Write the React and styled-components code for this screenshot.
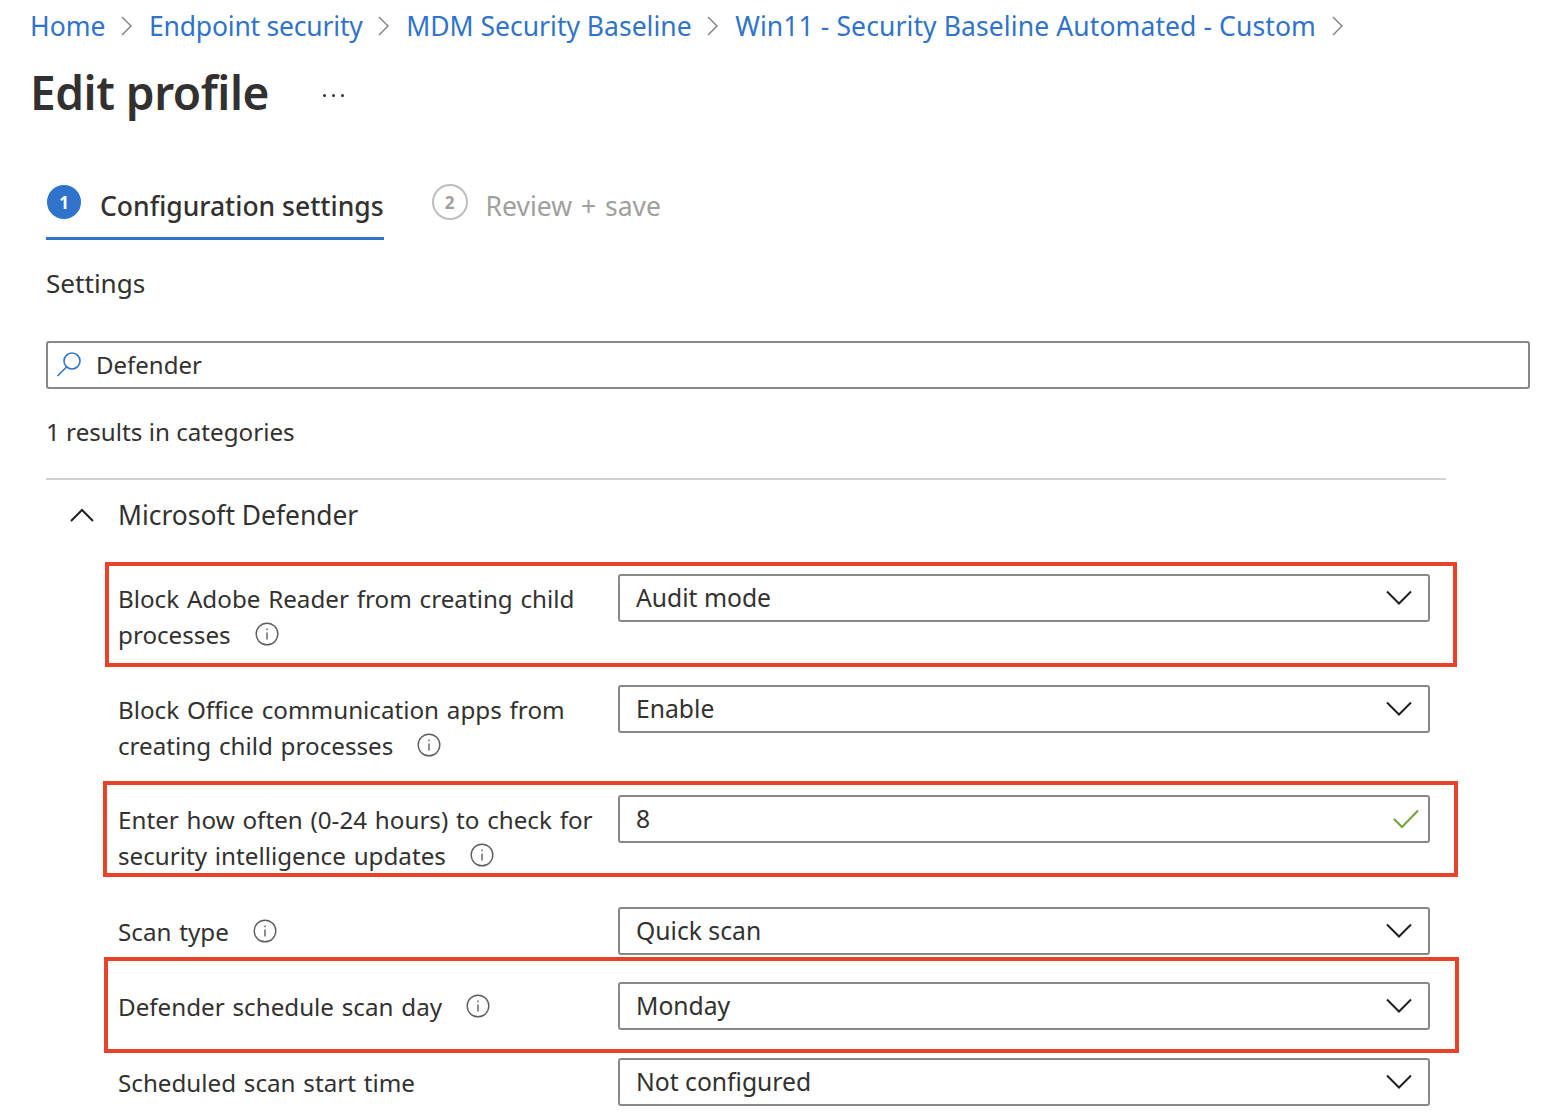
import React from "react";
import styled, { createGlobalStyle } from "styled-components";

const GlobalStyle = createGlobalStyle`
  html, body {
    margin: 0;
    background: #fff;
  }
  body {
    font-family: "Noto Sans", "Open Sans", "Liberation Sans", sans-serif;
    color: #323130;
  }
  * {
    box-sizing: border-box;
  }
`;

const Page = styled.div`
  width: 1542px;
  height: 1120px;
  overflow: hidden;
  padding-top: 7px;
`;

const Breadcrumbs = styled.nav`
  display: flex;
  align-items: center;
  height: 40px;
  padding: 0 0 2px 30px;
  font-size: 26.5px;
  color: #2f73cb;
  white-space: nowrap;
`;

const Crumb = styled.span`
  letter-spacing: ${(p) => p.$spacing || 0}px;
`;

const CrumbSep = styled.svg`
  width: 14px;
  height: 22px;
  margin: 0 14.8px;
  fill: none;
  stroke: #7a7a7a;
  stroke-width: 1.3;
`;

const TitleRow = styled.div`
  display: flex;
  align-items: center;
  height: 68px;
  margin-top: 11px;
  padding-left: 30px;
`;

const Title = styled.h1`
  margin: 0;
  font-size: 46px;
  font-weight: 600;
  letter-spacing: -0.45px;
  color: #323130;
  line-height: 68px;
`;

const MoreDots = styled.span`
  display: flex;
  gap: 6px;
  margin: 6px 0 0 54px;
  i {
    width: 3px;
    height: 3px;
    border-radius: 50%;
    background: #323130;
  }
`;

const Tabs = styled.div`
  display: flex;
  margin: 56px 0 0 46px;
`;

const Tab = styled.div`
  display: flex;
  align-items: center;
  height: 58px;
  padding-bottom: 8px;
  margin-right: 48px;
  font-size: 26.5px;
  word-spacing: ${(p) => (p.$active ? 0 : 2)}px;
  font-weight: ${(p) => (p.$active ? 500 : 400)};
  color: ${(p) => (p.$active ? "#323130" : "#a19f9d")};
  border-bottom: 3px solid ${(p) => (p.$active ? "#2f73cb" : "transparent")};
`;

const StepBadge = styled.span`
  display: flex;
  align-items: center;
  justify-content: center;
  width: ${(p) => (p.$active ? 34 : 36)}px;
  height: ${(p) => (p.$active ? 34 : 36)}px;
  margin: -7px ${(p) => (p.$active ? "19px" : "18px")} 0 ${(p) => (p.$active ? "1px" : "0")};
  border-radius: 50%;
  font-size: 17px;
  font-weight: 700;
  color: ${(p) => (p.$active ? "#fff" : "#a19f9d")};
  background: ${(p) => (p.$active ? "#2f73cb" : "#fff")};
  border: 2px solid ${(p) => (p.$active ? "#2f73cb" : "#bdbdbd")};
`;

const SectionLabel = styled.div`
  margin: 25px 0 0 46px;
  height: 36px;
  line-height: 36px;
  font-size: 26.1px;
`;

const SearchBox = styled.div`
  display: flex;
  align-items: center;
  width: 1484px;
  height: 48px;
  margin: 40px 0 0 46px;
  padding: 0 0 2px 8px;
  border: 2px solid #8a8886;
  border-radius: 3px;
  font-size: 24px;
  svg {
    width: 26px;
    height: 26px;
    margin-right: 14px;
    fill: none;
    stroke: #2f73cb;
    stroke-width: 1.6;
  }
`;

const ResultCount = styled.div`
  margin: 25px 0 0 46px;
  height: 36px;
  line-height: 36px;
  font-size: 24.2px;
`;

const Divider = styled.div`
  width: 1400px;
  height: 2px;
  margin: 28px 0 0 46px;
  background: #d2d0ce;
`;

const GroupHeader = styled.div`
  display: flex;
  align-items: center;
  height: 36px;
  margin: 17px 0 29px 70px;
  font-size: 26.4px;
  svg {
    width: 24px;
    height: 14px;
    margin-right: 24px;
    fill: none;
    stroke: #201f1e;
    stroke-width: 2;
  }
`;

const Row = styled.div`
  display: flex;
  align-items: flex-start;
  margin-left: ${(p) => p.$left}px;
  padding-left: ${(p) => 118 - p.$left - (p.$marked ? 4 : 0)}px;
  padding-top: ${(p) => p.$top}px;
  height: ${(p) => p.$height}px;
  width: ${(p) => p.$width}px;
  border: ${(p) => (p.$marked ? "4px solid #e8432a" : "none")};
`;

const Label = styled.div`
  width: 500px;
  flex: none;
  padding-top: 7px;
  font-size: 24.2px;
  word-spacing: 1.5px;
  line-height: 36px;
`;

const InfoIcon = styled.svg`
  display: inline-block;
  width: 24px;
  height: 24px;
  margin-left: 24px;
  vertical-align: -2px;
  fill: none;
  stroke: #605e5c;
  stroke-width: 1.4;
`;

const Field = styled.div`
  display: flex;
  align-items: center;
  justify-content: space-between;
  flex: none;
  width: 812px;
  height: 48px;
  padding: 0 16px 1px;
  border: 2px solid #8a8886;
  border-radius: 3px;
  font-size: 24.7px;
`;

const Chevron = styled.svg`
  width: 26px;
  height: 15px;
  margin-right: 0;
  fill: none;
  stroke: #201f1e;
  stroke-width: 2;
`;

const Check = styled.svg`
  width: 26px;
  height: 20px;
  margin-right: -7px;
  fill: none;
  stroke: #6ba539;
  stroke-width: 2;
`;

const Info = () => (
  <InfoIcon viewBox="0 0 24 24">
    <circle cx="12" cy="12" r="10.8" />
    <path d="M12 10.5v7" />
    <path d="M12 6.6v1.6" />
  </InfoIcon>
);

const Sep = () => (
  <CrumbSep viewBox="0 0 14 22">
    <path d="M2 2l9 9-9 9" />
  </CrumbSep>
);

const rows = [
  { label: <>Block Adobe Reader from creating child<br />processes<Info /></>, value: "Audit mode", left: 105, width: 1352, height: 105, top: 8, marked: true },
  { label: <>Block Office communication apps from<br />creating child processes<Info /></>, value: "Enable", left: 100, width: 1358, height: 114, top: 18 },
  { label: <>Enter how often (0-24 hours) to check for<br />security intelligence updates<Info /></>, value: "8", left: 103, width: 1355, height: 96, top: 10, marked: true, check: true },
  { label: <>Scan type<Info /></>, value: "Quick scan", left: 100, width: 1358, height: 80, top: 30 },
  { label: <>Defender schedule scan day<Info /></>, value: "Monday", left: 104, width: 1355, height: 96, top: 21, marked: true },
  { label: "Scheduled scan start time", value: "Not configured", left: 100, width: 1358, height: 67, top: 5 },
];

export default function App() {
  return (
    <Page>
      <GlobalStyle />
      <Breadcrumbs>
        <Crumb>Home</Crumb>
        <Sep />
        <Crumb $spacing={-0.2}>Endpoint security</Crumb>
        <Sep />
        <Crumb>MDM Security Baseline</Crumb>
        <Sep />
        <Crumb $spacing={0.1}>Win11 - Security Baseline Automated - Custom</Crumb>
        <Sep />
      </Breadcrumbs>

      <TitleRow>
        <Title>Edit profile</Title>
        <MoreDots><i /><i /><i /></MoreDots>
      </TitleRow>

      <Tabs>
        <Tab $active>
          <StepBadge $active>1</StepBadge>
          Configuration settings
        </Tab>
        <Tab>
          <StepBadge>2</StepBadge>
          Review + save
        </Tab>
      </Tabs>

      <SectionLabel>Settings</SectionLabel>

      <SearchBox>
        <svg viewBox="0 0 26 26">
          <circle cx="16" cy="10" r="8" />
          <path d="M10.5 16L1.5 25" />
        </svg>
        Defender
      </SearchBox>

      <ResultCount>1 results in categories</ResultCount>
      <Divider />

      <GroupHeader>
        <svg viewBox="0 0 24 14">
          <path d="M1 13L12 2l11 11" />
        </svg>
        Microsoft Defender
      </GroupHeader>

      {rows.map((row) => (
        <Row
          key={row.value}
          $left={row.left}
          $width={row.width}
          $height={row.height}
          $top={row.top}
          $marked={row.marked}
        >
          <Label>{row.label}</Label>
          <Field>
            {row.value}
            {row.check ? (
              <Check viewBox="0 0 26 20">
                <path d="M1 10l8 8L25 1.5" />
              </Check>
            ) : (
              <Chevron viewBox="0 0 26 15">
                <path d="M1 1.5l12 12 12-12" />
              </Chevron>
            )}
          </Field>
        </Row>
      ))}
    </Page>
  );
}
